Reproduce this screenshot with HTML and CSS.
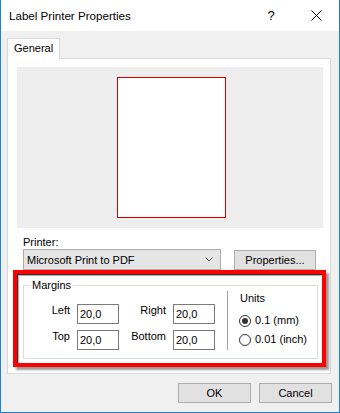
FILE: index.html
```html
<!DOCTYPE html>
<html lang="en">
<head>
  <meta charset="UTF-8" />
  <title>Label Printer Properties</title>
  <link rel="stylesheet" href="styles.css">
</head>
<body>
  <div class="window">
    <div class="titlebar">
      <span class="title">Label Printer Properties</span>
      <span class="title-btn help">?</span>
      <span class="title-btn close">
        <svg width="11" height="11" viewBox="0 0 11 11"><path d="M0.5 0.5 L10.5 10.5 M10.5 0.5 L0.5 10.5" stroke="#000" stroke-width="1" fill="none"/></svg>
      </span>
    </div>

    <div class="content">
      <div class="tabs">
        <div class="tab">General</div>
      </div>

      <div class="panel">
        <!-- Label preview -->
        <div class="preview">
          <div class="page"></div>
        </div>

        <label class="printer-label">Printer:</label>
        <div class="printer-row">
          <div class="select">
            <span>Microsoft Print to PDF</span>
            <svg width="8" height="5" viewBox="0 0 8 5"><path d="M0.5 0.5 L4 4 L7.5 0.5" stroke="#555" stroke-width="1" fill="none"/></svg>
          </div>
          <button class="btn props">Properties...</button>
        </div>

        <!-- Margins (highlighted) -->
        <div class="highlight">
          <fieldset class="group">
            <legend>Margins</legend>
            <div class="margins">
              <div class="fields">
                <label>Left</label>
                <input class="field" type="text" value="20,0" />
                <label>Right</label>
                <input class="field" type="text" value="20,0" />
                <label>Top</label>
                <input class="field" type="text" value="20,0" />
                <label>Bottom</label>
                <input class="field" type="text" value="20,0" />
              </div>
              <div class="sep"></div>
              <div class="units">
                <div>Units</div>
                <div class="radio first"><span class="dot checked"></span>0.1 (mm)</div>
                <div class="radio"><span class="dot"></span>0.01 (inch)</div>
              </div>
            </div>
          </fieldset>
        </div>
      </div>

      <div class="actions">
        <button class="btn">OK</button>
        <button class="btn">Cancel</button>
      </div>
    </div>
  </div>
</body>
</html>
```

FILE: styles.css
```css
body {
  margin: 0;
  font-family: "Liberation Sans", Arial, sans-serif;
  font-size: 11px;
  color: #000;
}

.window {
  width: 340px;
  height: 413px;
  box-sizing: border-box;
  background: #f0f0f0;
  border: 1px solid #1883d7;
  border-top: none;
}

.titlebar {
  height: 31px;
  background: #fff;
  display: flex;
  align-items: center;
}

.title {
  flex: 1;
  padding-left: 8px;
  font-size: 11.6px;
}

.title-btn {
  height: 31px;
  display: flex;
  align-items: center;
  justify-content: center;
}

.help {
  width: 44px;
  font-size: 13px;
}

.close {
  width: 46px;
}

.content {
  padding: 7px 8px 0 6px;
}

.tabs {
  display: flex;
}

.tab {
  position: relative;
  z-index: 1;
  width: 53px;
  height: 21px;
  box-sizing: border-box;
  border: 1px solid #d9d9d9;
  border-bottom: none;
  background: #fff;
  padding: 3px 0 0 6px;
  margin-bottom: -1px;
  line-height: 13px;
}

.panel {
  height: 316px;
  box-sizing: border-box;
  border: 1px solid #d9d9d9;
  background: #fff;
  padding: 8px 7px 0 9px;
}

.preview {
  height: 161px;
  background: #eeeeee;
  display: flex;
  align-items: center;
  justify-content: center;
}

.page {
  width: 109px;
  height: 141px;
  box-sizing: border-box;
  background: #fff;
  border: 1px solid #d40000;
  margin-left: 3px;
}

.printer-label {
  display: block;
  margin-top: 8px;
  padding-left: 6px;
  line-height: 13px;
}

.printer-row {
  display: flex;
  align-items: flex-end;
  gap: 13px;
  padding-left: 6px;
}

.select {
  width: 198px;
  height: 21px;
  box-sizing: border-box;
  border: 1px solid #acacac;
  background: #e5e5e5;
  display: flex;
  align-items: center;
  justify-content: space-between;
  padding: 0 7px 0 3px;
}

.btn {
  height: 20px;
  box-sizing: border-box;
  border: 1px solid #adadad;
  background: #e1e1e1;
  font: inherit;
  color: #000;
  padding: 0;
}

.props {
  width: 82px;
}

.highlight {
  width: 313px;
  height: 97px;
  box-sizing: border-box;
  margin-left: -4px;
  border: 4px solid #ff0000;
  box-shadow: inset 1px 1px 0 #333, inset 2px 2px 1px #aaa, 3px 3px 2px rgba(0, 0, 0, 0.4);
  background: #fff;
  padding-top: 1px;
}

.group {
  margin: 4px 4px 0 6px;
  padding: 0 0 8px 0;
  border: 1px solid #dcdcdc;
  min-width: 0;
}

.group legend {
  margin-left: 6px;
  padding: 0 2px;
  line-height: 13px;
}

.margins {
  display: flex;
  align-items: flex-start;
}

.fields {
  display: grid;
  grid-template-columns: 46px 42px 40px 42px;
  column-gap: 7px;
  row-gap: 6px;
  padding-top: 12px;
  align-items: start;
}

.fields label {
  text-align: right;
  line-height: 13px;
}

.field {
  width: 42px;
  height: 20px;
  box-sizing: border-box;
  border: 1px solid #7a7a7a;
  font: inherit;
  padding: 0 2px;
  margin: 0;
}

.sep {
  width: 1px;
  height: 59px;
  background: #a0a0a0;
  margin: -1px 12px 0 12px;
}

.units {
  line-height: 13px;
}

.radio {
  display: flex;
  align-items: center;
  gap: 4px;
  height: 13px;
  margin-left: -1px;
  margin-top: 6px;
}

.radio.first {
  margin-top: 9px;
}

.dot {
  width: 12px;
  height: 12px;
  box-sizing: border-box;
  border: 1px solid #333;
  border-radius: 50%;
  background: #fff;
  display: flex;
  align-items: center;
  justify-content: center;
}

.dot.checked::after {
  content: "";
  width: 6px;
  height: 6px;
  border-radius: 50%;
  background: #333;
}

.actions {
  display: flex;
  justify-content: flex-end;
  gap: 8px;
  padding-top: 9px;
  margin-right: -1px;
}

.actions .btn {
  width: 73px;
}
```
